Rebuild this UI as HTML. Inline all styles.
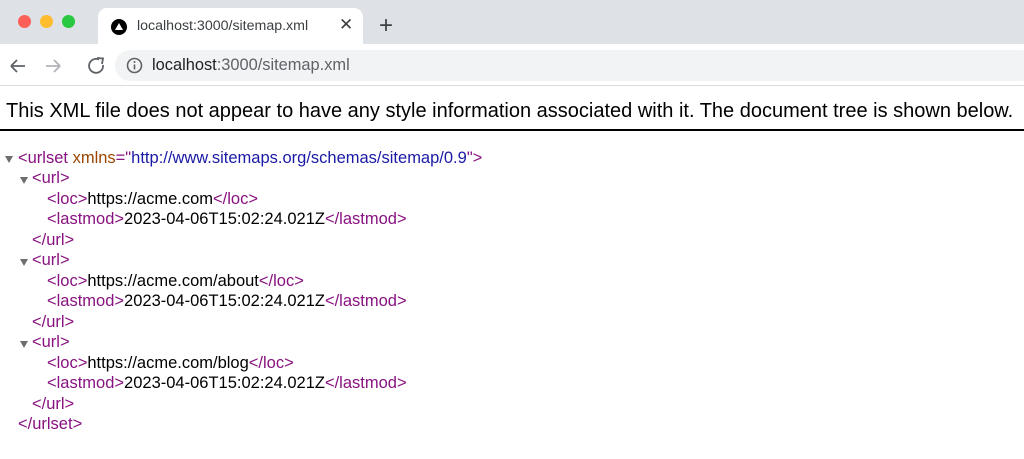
<!DOCTYPE html>
<html><head><meta charset="utf-8"><style>
*{margin:0;padding:0;box-sizing:border-box}
body{width:1024px;height:459px;overflow:hidden;background:#fff;font-family:"Liberation Sans",sans-serif;position:relative}
.abs{position:absolute}
.tabbar{left:0;top:0;width:1024px;height:44px;background:#dee1e6}
.dot{width:13px;height:13px;border-radius:50%;top:15px}
.tab{left:98px;top:8px;width:265px;height:36px;background:#fff;border-radius:9px 9px 0 0}
.sep{left:0;top:85px;width:1024px;height:1px;background:#dadce0}
.url{left:115px;top:50px;width:920px;height:31px;background:#f1f3f4;border-radius:16px}
.l{position:absolute;font-size:16.5px;white-space:nowrap;color:#000;line-height:16px}
.t{color:#881280}.a{color:#994500}.v{color:#1a1aa6}
.tri{position:absolute;width:0;height:0;border-left:4px solid transparent;border-right:4px solid transparent;border-top:7px solid #6e6e6e}
</style></head><body>
<div class="abs tabbar"></div>
<div class="abs dot" style="left:18px;background:#fe5f57"></div>
<div class="abs dot" style="left:40px;background:#febc2e"></div>
<div class="abs dot" style="left:62px;background:#28c840"></div>
<div class="abs tab"></div>
<div class="abs" style="left:111px;top:19px;width:16px;height:16px;border-radius:50%;background:#000"></div>
<div class="abs" style="left:115px;top:23px;width:0;height:0;border-left:4px solid transparent;border-right:4px solid transparent;border-bottom:7px solid #fff"></div>
<div class="abs" style="left:137px;top:18px;font-size:14.2px;color:#3c4043">localhost:3000/sitemap.xml</div>
<div class="abs" style="left:339px;top:15px;font-size:17px;color:#3c4043">✕</div>
<div class="abs" style="left:379px;top:12px;font-size:24px;color:#3c4043;font-weight:300">+</div>
<div class="abs sep"></div>
<svg class="abs" style="left:8px;top:56px" width="100" height="20" viewBox="0 0 100 20" fill="none" stroke-width="1.8">
<path d="M3 10H17M3 10L9 4M3 10L9 16" stroke="#5f6368"/>
<path d="M38 10H52M52 10L46 4M52 10L46 16" stroke="#b0b3b8"/>
<path d="M95 9A7 7 0 1 1 91 3.5" stroke="#5f6368"/><path d="M89 2L95 2.5L94 8" stroke="#5f6368" fill="none"/>
</svg>
<div class="abs url"></div>
<svg class="abs" style="left:126px;top:57px" width="17" height="17" viewBox="0 0 17 17"><circle cx="8.5" cy="8.5" r="7" stroke="#5f6368" stroke-width="1.6" fill="none"/><path d="M8.5 7.5V12.5" stroke="#5f6368" stroke-width="1.6"/><circle cx="8.5" cy="5" r="1" fill="#5f6368"/></svg>
<div class="abs" style="left:152px;top:56px;font-size:16.4px;color:#202124">localhost<span style="color:#5f6368">:3000/sitemap.xml</span></div>
<div class="abs" style="left:6px;top:100px;font-size:20px;color:#000;white-space:nowrap">This XML file does not appear to have any style information associated with it. The document tree is shown below.</div>
<div class="abs" style="left:0;top:129px;width:1024px;height:2px;background:#000"></div>

<div class="tri" style="left:5px;top:156px"></div>
<div class="l" style="left:18px;top:150px"><span class="t">&lt;urlset </span><span class="a">xmlns</span><span class="t">="</span><span class="v">http://www.sitemaps.org/schemas/sitemap/0.9</span><span class="t">"&gt;</span></div>

<div class="tri" style="left:20px;top:177px"></div>
<div class="l t" style="left:32px;top:170px">&lt;url&gt;</div>
<div class="l" style="left:47px;top:191px"><span class="t">&lt;loc&gt;</span>https://acme.com<span class="t">&lt;/loc&gt;</span></div>
<div class="l" style="left:47px;top:211px"><span class="t">&lt;lastmod&gt;</span>2023-04-06T15:02:24.021Z<span class="t">&lt;/lastmod&gt;</span></div>
<div class="l t" style="left:32px;top:232px">&lt;/url&gt;</div>

<div class="tri" style="left:20px;top:259px"></div>
<div class="l t" style="left:32px;top:252px">&lt;url&gt;</div>
<div class="l" style="left:47px;top:273px"><span class="t">&lt;loc&gt;</span>https://acme.com/about<span class="t">&lt;/loc&gt;</span></div>
<div class="l" style="left:47px;top:293px"><span class="t">&lt;lastmod&gt;</span>2023-04-06T15:02:24.021Z<span class="t">&lt;/lastmod&gt;</span></div>
<div class="l t" style="left:32px;top:314px">&lt;/url&gt;</div>

<div class="tri" style="left:20px;top:341px"></div>
<div class="l t" style="left:32px;top:334px">&lt;url&gt;</div>
<div class="l" style="left:47px;top:355px"><span class="t">&lt;loc&gt;</span>https://acme.com/blog<span class="t">&lt;/loc&gt;</span></div>
<div class="l" style="left:47px;top:375px"><span class="t">&lt;lastmod&gt;</span>2023-04-06T15:02:24.021Z<span class="t">&lt;/lastmod&gt;</span></div>
<div class="l t" style="left:32px;top:396px">&lt;/url&gt;</div>
<div class="l t" style="left:18px;top:416px">&lt;/urlset&gt;</div>
</body></html>
